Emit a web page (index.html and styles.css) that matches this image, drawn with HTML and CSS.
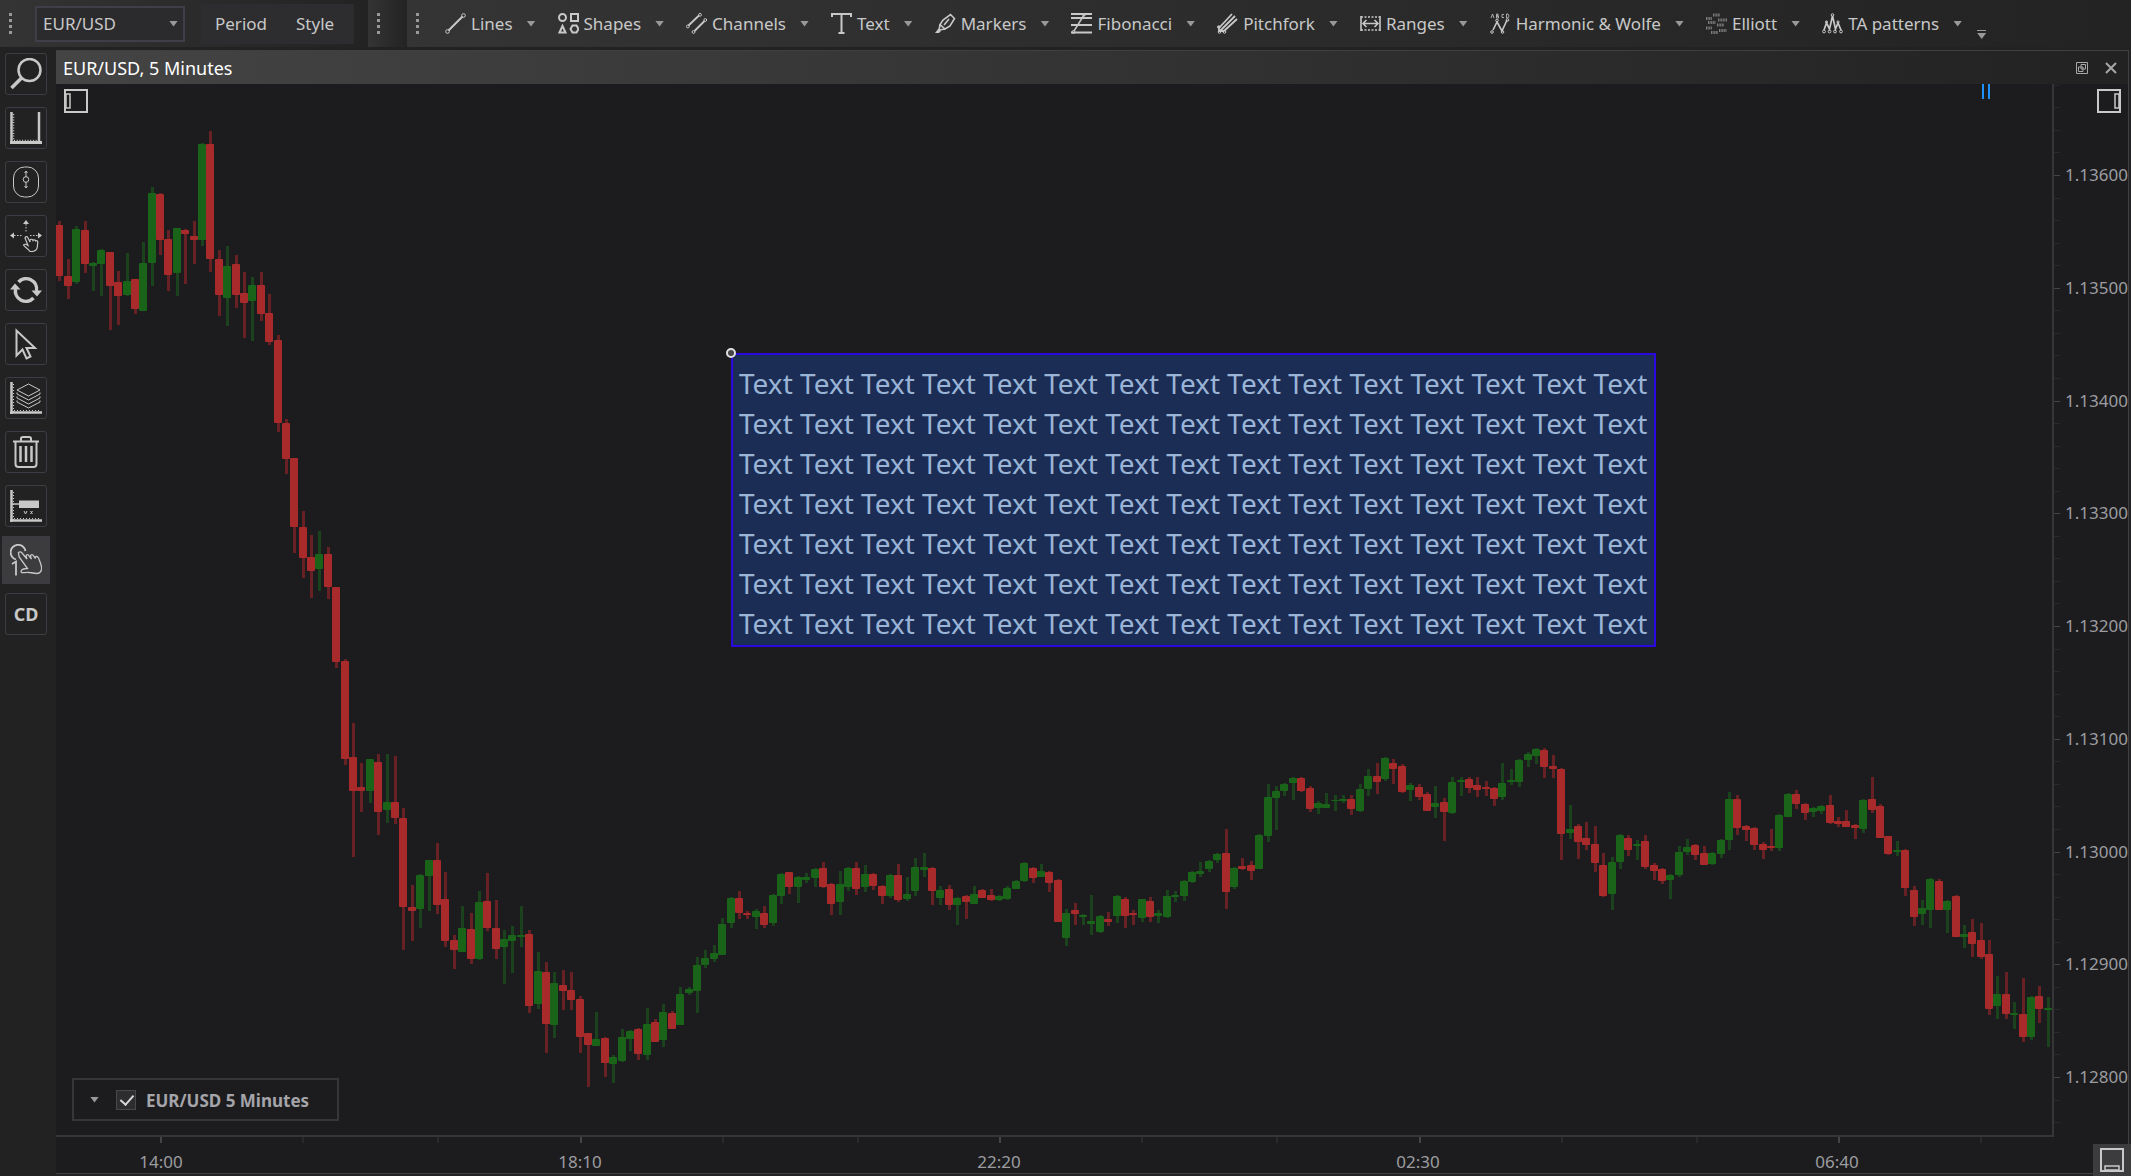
FILE: index.html
```html
<!DOCTYPE html>
<html lang="en">
<head>
  <meta charset="UTF-8" />
  <title>EUR/USD, 5 Minutes</title>
  <link rel="stylesheet" href="styles.css">
</head>
<body>

  <!-- Top toolbars -->
  <header class="toolbars">
    <div class="toolbar toolbar-symbol">
      <span class="grip"></span>
      <div class="combo">
        <select class="combo-select" aria-label="Symbol">
          <option>EUR/USD</option>
        </select>
        <span class="arrow"></span>
      </div>
      <div class="menu">
        <button class="menu-button">Period</button>
        <button class="menu-button">Style</button>
      </div>
    </div>
    <div class="toolbar toolbar-empty">
      <span class="grip"></span>
    </div>
    <div class="toolbar toolbar-drawing">
      <span class="grip"></span>
      <button class="tool">
        <svg class="tool-icon" viewBox="0 0 21 21"><path d="M3.5 17.5 17.5 3.5" stroke-width="2"/><circle cx="2.5" cy="18.5" r="1.8"/><circle cx="18.5" cy="2.5" r="1.8"/></svg>
        Lines <span class="arrow"></span>
      </button>
      <button class="tool">
        <svg class="tool-icon" viewBox="0 0 21 21"><g stroke-width="2"><circle cx="4.5" cy="4.5" r="3.5"/><path d="M13 1h7v7h-7zM4.5 13 1.5 19.5h6z"/><path d="M14.5 12.5h4l2 3.5-2 3.5h-4l-2-3.5z"/></g></svg>
        Shapes <span class="arrow"></span>
      </button>
      <button class="tool">
        <svg class="tool-icon" viewBox="0 0 21 21"><path d="M2.5 12.5 13 2.5M8.5 18 18.5 8" stroke-width="1.8"/><circle cx="1.8" cy="13.5" r="1.4"/><circle cx="14" cy="1.8" r="1.4"/><circle cx="7.5" cy="19" r="1.4"/><circle cx="19.3" cy="7" r="1.4"/></svg>
        Channels <span class="arrow"></span>
      </button>
      <button class="tool">
        <svg class="tool-icon" viewBox="0 0 21 21"><path d="M1 4V1h19v3M10.5 1v19M7.5 20h6" stroke-width="2"/></svg>
        Text <span class="arrow"></span>
      </button>
      <button class="tool">
        <svg class="tool-icon" viewBox="0 0 21 21"><path d="M15.5 1.5 19.5 5.5 15 13 10 16 5 11.5 8 7zM5 11.5 4 17l6-1M9 12l5-6" stroke-width="1.6"/><path class="solid" d="M3.5 15.5 6 18l-2 2H0z"/></svg>
        Markers <span class="arrow"></span>
      </button>
      <button class="tool">
        <svg class="tool-icon" viewBox="0 0 21 21"><path d="M0 1h21M0 5h21M0 12h21M0 19.5h21" stroke-width="2"/><path d="M3 18 13 2" stroke-width="1.5"/><circle cx="2.5" cy="19" r="1.5"/><circle cx="13" cy="1.5" r="1.5"/></svg>
        Fibonacci <span class="arrow"></span>
      </button>
      <button class="tool">
        <svg class="tool-icon" viewBox="0 0 21 21"><path d="M2 15 15 1M3 18 18 3M7 18 20 6M2 13v5h5" stroke-width="1.8"/><circle cx="1.8" cy="14" r="1.3"/><circle cx="2.5" cy="19" r="1.3"/><circle cx="7.5" cy="19" r="1.3"/></svg>
        Pitchfork <span class="arrow"></span>
      </button>
      <button class="tool">
        <svg class="tool-icon" viewBox="0 0 21 21"><path d="M1 3v15M20 3v15M3 10.5h15M6.5 7 3 10.5 6.5 14M14.5 7 18 10.5 14.5 14" stroke-width="1.6"/><path d="M1 4h19M1 17h19" stroke-width="1.5" stroke-dasharray="2 1.5"/></svg>
        Ranges <span class="arrow"></span>
      </button>
      <button class="tool">
        <svg class="tool-icon" viewBox="0 0 21 21"><path d="M3 17 7 9l5 9 5-11" stroke-width="1.6"/><path d="M1 5 2.5 1 4 5M6.5 1v4h2V3h-2 1.5V1zM14 1.5h-2v3h2M16.5 1v4h1.5l1-2-1-2z" stroke-width=".8"/><circle cx="2" cy="19" r="1.3"/><circle cx="7" cy="7.5" r="1.3"/><circle cx="12.5" cy="19" r="1.3"/><circle cx="17.5" cy="7" r="1.3"/></svg>
        Harmonic &amp; Wolfe <span class="arrow"></span>
      </button>
      <button class="tool">
        <svg class="tool-icon dim" viewBox="0 0 21 21"><path d="M7 2h7M0 5.5h6M12 7h9M2 9.5h8M11 12h7M0 15h6M13 17.5h8M5 19.5h7" stroke-width="3" stroke-dasharray="1 .6"/></svg>
        Elliott <span class="arrow"></span>
      </button>
      <button class="tool">
        <svg class="tool-icon" viewBox="0 0 21 21"><path d="M2 17 4.5 10 7.5 16 10.5 3l3 13 2.5-6 3 7" stroke-width="1.7"/><circle cx="2" cy="18.5" r="1.4"/><circle cx="7.5" cy="18.5" r="1.4"/><circle cx="13" cy="18.5" r="1.4"/><circle cx="19" cy="18.5" r="1.4"/><circle cx="4.5" cy="9" r="1.1"/><circle cx="10.5" cy="2" r="1.3"/><circle cx="16" cy="9" r="1.1"/></svg>
        TA patterns <span class="arrow"></span>
      </button>
      <button class="overflow" aria-label="More tools"><span class="arrow"></span></button>
    </div>
  </header>

  <div class="workspace">

    <!-- Side tools -->
    <nav class="sidebar">
      <button class="side-button" aria-label="Zoom">
        <svg class="side-icon" viewBox="0 0 32 32"><circle cx="19.5" cy="12" r="11" stroke-width="2.5"/><path d="M11.5 20 1.5 30" stroke-width="3.5"/></svg>
      </button>
      <button class="side-button" aria-label="Scales">
        <svg class="side-icon" viewBox="0 0 32 32"><path d="M1.5 0v32M29 0v30" stroke-width="2.5"/><path d="M0 30.5h32" stroke-width="3"/><path d="M3.5 2v28M4 28.5h25" stroke-width="1.5" stroke-dasharray="1 1.7"/></svg>
      </button>
      <button class="side-button" aria-label="Mouse wheel">
        <svg class="side-icon" viewBox="0 0 32 32"><rect x="3.5" y="1" width="25" height="30" rx="11"/><circle cx="16" cy="13.5" r="2.8"/><path d="M16 6v5M16 16v5M14.5 7 16 5l1.5 2M14.5 20l1.5 2 1.5-2"/></svg>
      </button>
      <button class="side-button" aria-label="Drag chart">
        <svg class="side-icon" viewBox="0 0 32 32"><path d="M16 4v9M4 15.5h9M20 15.5h9" stroke-dasharray="1.5 1.5"/><path class="solid" d="M16 0l3 4h-6zM0 15.5l4-3v6zM32 15.5l-4-3v6z"/><path d="M20 31.5c-2-3-5-4-6.5-6.5 1-1.5 3-.5 4.5.5L15 18c0-1.5 2-2 2.8-.5L20 22v-2c1-1.3 2.5-.8 3 .5.5-1 2.3-1 2.8.5.8-.8 2-.2 2 1l-.5 5c0 2-2 5-7.3 4.500z" stroke-width="1.2"/></svg>
      </button>
      <button class="side-button" aria-label="Refresh">
        <svg class="side-icon" viewBox="0 0 32 32"><path d="M8.5 8A10.5 10.5 0 0 1 26.5 17M23.5 24A10.5 10.5 0 0 1 5.5 15" stroke-width="3.5"/><path class="solid" d="M0 15.5h10.5L5 9.5zM21.5 16.5H32L27 22.5z"/></svg>
      </button>
      <button class="side-button" aria-label="Pointer">
        <svg class="side-icon" viewBox="0 0 32 32"><path d="M6.5 2.5v25l6-6 4 9 4-2-4-8.5h8.5z" stroke-width="2"/></svg>
      </button>
      <button class="side-button" aria-label="Layers">
        <svg class="side-icon" viewBox="0 0 32 32"><path d="M1.5 0v32" stroke-width="2.5"/><path d="M0 30.5h32" stroke-width="2.5"/><path d="M3.5 2v28M4 28.5h25" stroke-dasharray="1 2"/><path d="M18.5 2 30 8l-11.5 6L7 8zM7 10.5 7 12l11.5 6L30 12v-1.5M7 14.5V16l11.5 6L30 16v-1.5M7 18.5V20l11.5 6L30 20v-1.5"/></svg>
      </button>
      <button class="side-button" aria-label="Delete">
        <svg class="side-icon" viewBox="0 0 32 32"><path d="M3 5.5h26M11 5V2.5C11 1.5 12 1 13 1h6c1 0 2 .5 2 1.5V5M5.500 6v22c0 2 1 3 3 3h15c2 0 3-1 3-3V6" stroke-width="2"/><path d="M10.5 10v16M16 10v16M21.5 10v16" stroke-width="2.5"/></svg>
      </button>
      <button class="side-button" aria-label="Price marker">
        <svg class="side-icon" viewBox="0 0 32 32"><path d="M1.5 0v32M0 30.5h32" stroke-width="2.5"/><path d="M3.5 2v28M4 28.5h25" stroke-dasharray="1 2"/><path d="M2 14h8" stroke-width="1.5"/><path class="solid" d="M9 10.5h20v7.5H9z"/><path d="M14 21l1.5 3 1.5-3M20.5 21l2 3M22.5 21l-2 3"/></svg>
      </button>
      <button class="side-button active" aria-label="One click trading">
        <svg class="side-icon" viewBox="0 0 32 32"><path d="M6 15.5A7.5 7.5 0 1 1 15.5 7M2 20l4-2.500V31.5" stroke-width="1.8"/><path d="M8.5 8.5c1.5-1.3 2.7-.5 3.5.5l5 6c-.5-1.5-1.5-3-.5-4s2 0 2.5 1l2.5 3c-1-2-1.5-3-.5-4s2 0 2.5 1l2 2.5c-.5-1.5 0-2 1-2s1.5.5 2 1.5c1.5 3.5 3.5 9 3 11.5-.5 2-2.500 4-5 4l-7-1c-3-.5-7 .5-8 0-1-1 0-3 2-3.5l4-.5-8-11c-.8-1.5-.8-3.5-1-4z" stroke-width="1.3"/></svg>
      </button>
      <button class="side-button">CD</button>
    </nav>

    <main class="chart-window">
      <div class="titlebar">
        <h1 class="title">EUR/USD, 5 Minutes</h1>
        <button class="window-button" aria-label="Restore">
          <svg class="window-icon" viewBox="0 0 12 12"><path d="M.5.5h11v11H.5z"/><path d="M5 2.500h4.500V7H5zM2.500 5H7v4.500H2.500z"/></svg>
        </button>
        <button class="window-button" aria-label="Close">
          <svg class="window-icon" viewBox="0 0 12 12"><path d="M1 1l10 10M11 1 1 11" stroke-width="2"/></svg>
        </button>
      </div>

      <div class="chart">
        <section class="plot">
          <svg class="candles" id="candles" viewBox="0 0 1996 1051" preserveAspectRatio="none"></svg>

          <button class="panel-toggle toggle-left" aria-label="Left panel">
            <svg class="toggle-icon" viewBox="0 0 24 24"><path d="M1 1h22v22H1z" stroke-width="2"/><path d="M2 5h4v14H2z" stroke-width="1.5"/></svg>
          </button>
          <div class="pause"></div>

          <div class="note">
            <span class="note-handle"></span>
            <p class="note-text">
              Text Text Text Text Text Text Text Text Text Text Text Text Text Text Text<br>
              Text Text Text Text Text Text Text Text Text Text Text Text Text Text Text<br>
              Text Text Text Text Text Text Text Text Text Text Text Text Text Text Text<br>
              Text Text Text Text Text Text Text Text Text Text Text Text Text Text Text<br>
              Text Text Text Text Text Text Text Text Text Text Text Text Text Text Text<br>
              Text Text Text Text Text Text Text Text Text Text Text Text Text Text Text<br>
              Text Text Text Text Text Text Text Text Text Text Text Text Text Text Text
            </p>
          </div>

          <div class="legend">
            <span class="arrow"></span>
            <input class="legend-check" type="checkbox" id="series" checked>
            <label class="legend-label" for="series">EUR/USD 5 Minutes</label>
          </div>
        </section>

        <aside class="price-axis">
          <svg class="price-ticks" id="priceTicks" viewBox="0 0 6 1051" preserveAspectRatio="none"></svg>
          <span>1.13600</span>
          <span>1.13500</span>
          <span>1.13400</span>
          <span>1.13300</span>
          <span>1.13200</span>
          <span>1.13100</span>
          <span>1.13000</span>
          <span>1.12900</span>
          <span>1.12800</span>
          <button class="panel-toggle toggle-right" aria-label="Right panel">
            <svg class="toggle-icon" viewBox="0 0 24 24"><path d="M1 1h22v22H1z" stroke-width="2"/><path d="M18 5h4v14h-4z" stroke-width="1.5"/></svg>
          </button>
        </aside>

        <footer class="time-axis">
          <svg class="time-ticks" id="timeTicks" viewBox="0 0 1998 6" preserveAspectRatio="none"></svg>
          <span>14:00</span>
          <span>18:10</span>
          <span>22:20</span>
          <span>02:30</span>
          <span>06:40</span>
        </footer>
      </div>
    </main>
  </div>

  <button class="bottom-toggle" aria-label="Bottom panel">
    <svg class="toggle-icon" viewBox="0 0 24 24"><path d="M1 1h22v22H1z" stroke-width="2"/><path d="M5 22v-4h14v4z" stroke-width="1.5"/></svg>
  </button>

  <script>
    // direction, then high, body top, body bottom, low
    const series = `
      r,137,141,192,197 r,175,192,202,215 g,142,145,198,200 r,137,146,180,189 g,178,179,182,207 g,165,166,180,212
      r,168,168,202,246 r,187,198,212,241 g,169,197,211,212 r,195,195,225,230 g,158,179,227,227 g,103,109,179,202
      r,109,110,156,171 r,146,155,191,207 g,144,144,189,212 r,145,146,150,200 r,137,152,156,180 g,59,60,156,162
      r,47,60,175,188 r,166,175,211,232 g,162,182,214,242 r,171,180,211,224 r,188,209,219,254 g,193,201,217,257
      r,188,201,230,237 r,210,229,258,261 r,251,256,339,348 r,335,339,375,390 r,374,374,443,469 r,427,443,474,494
      r,451,473,487,514 g,447,470,485,507 r,463,470,503,515 r,503,503,578,584 r,575,577,675,681 r,639,673,707,773
      r,679,703,707,728 g,675,675,707,719 r,670,678,728,751 g,670,718,726,739 r,672,718,734,740 r,724,734,823,866
      r,801,823,827,857 g,790,791,825,844 g,776,776,792,827 r,759,776,821,830 r,788,815,857,863 r,851,856,866,885
      g,822,844,868,868 r,829,845,875,880 g,807,818,875,876 r,789,817,844,847 r,816,844,865,875 g,846,855,863,900
      g,842,851,857,889 g,822,851,853,863 r,846,850,922,929 g,868,887,920,925 r,878,888,940,969 g,888,899,941,954
      r,886,901,907,926 r,888,906,916,926 r,912,915,953,969 r,949,949,961,1003 g,928,955,962,962 r,953,954,979,993
      g,971,973,980,999 g,945,953,977,978 g,946,947,955,967 r,944,945,970,976 g,924,940,971,976 r,935,938,958,958
      g,920,928,956,963 r,927,929,945,945 g,903,910,941,941 g,903,905,909,911 g,873,881,907,929 g,866,874,881,884
      g,861,869,875,878 g,834,840,871,871 g,813,814,839,844 r,807,814,829,835 r,827,829,831,835 g,825,827,833,845
      r,822,829,841,844 g,810,811,839,842 g,789,790,812,820 r,788,788,803,810 g,792,793,803,819 g,789,793,796,799
      g,784,785,794,803 r,778,784,803,804 r,799,800,820,831 g,787,800,818,831 g,783,784,803,807 r,778,784,805,811
      g,781,790,803,808 r,789,790,802,806 r,801,802,812,820 g,790,791,812,814 r,780,791,816,818 g,793,810,815,817
      g,774,783,807,812 g,769,783,786,793 r,783,784,807,821 g,802,806,814,821 r,801,805,821,826 g,813,814,821,841
      r,811,812,818,835 g,802,810,820,820 r,805,806,814,814 r,805,811,816,817 g,811,812,816,817 g,802,804,815,816
      g,796,797,805,805 g,778,779,797,798 r,783,784,794,799 g,780,787,793,793 r,787,788,799,808 r,795,796,838,838
      g,825,829,854,862 r,819,826,830,841 g,830,831,833,841 g,811,837,840,851 g,831,832,848,849 r,828,835,838,842
      g,811,812,832,839 r,813,815,832,844 r,826,829,831,841 g,815,815,834,838 r,813,817,833,838 g,826,829,832,839
      g,806,812,833,834 g,807,811,813,818 g,796,797,812,817 g,787,788,798,799 g,778,787,790,793 g,776,777,785,788
      g,769,770,776,779 r,745,769,808,825 g,783,784,803,805 r,774,782,785,786 r,777,781,787,796 g,750,751,785,785
      g,700,713,752,758 g,702,707,714,746 g,699,700,707,712 g,693,694,699,716 r,693,694,707,708 r,702,704,725,728
      g,717,719,724,730 g,709,720,724,724 g,711,716,717,727 g,711,715,717,719 r,711,715,725,731 g,700,705,727,728
      g,685,692,705,712 r,679,692,698,710 g,673,674,695,697 r,675,679,685,700 r,680,682,708,709 g,699,701,706,717
      r,700,703,713,716 r,708,710,727,727 g,702,719,723,734 r,714,718,728,757 g,693,698,729,730 g,693,696,698,712
      r,693,695,704,709 r,693,701,706,713 r,697,703,705,712 r,703,704,715,722 g,679,699,713,716 g,685,696,698,701
      g,675,676,698,703 g,668,670,676,683 g,664,665,672,680 r,664,666,683,694 r,671,682,685,694 r,684,685,750,776
      g,721,745,749,755 r,740,742,758,775 r,738,754,761,766 r,742,760,779,788 r,769,781,812,813 g,773,778,810,826
      g,750,751,778,785 r,751,754,766,772 g,756,760,762,776 r,751,757,783,785 r,779,781,787,796 r,784,785,797,800
      g,790,791,796,815 g,762,768,791,793 g,755,763,768,771 r,760,761,771,776 r,762,769,781,781 g,768,769,780,781
      g,755,756,770,774 g,708,715,756,766 r,711,715,744,751 r,741,742,746,757 r,743,744,761,766 r,758,760,766,775
      r,745,762,764,767 g,730,731,764,767 g,709,710,733,733 r,706,710,720,725 r,719,720,729,736 g,723,724,728,733
      g,721,722,727,730 r,711,721,739,740 r,733,737,740,743 r,726,737,743,743 r,740,741,744,755 g,715,716,745,749
      r,693,715,726,729 r,720,722,754,754 r,752,752,770,771 g,757,766,768,772 r,765,766,804,812 r,802,806,833,842
      g,816,824,830,841 g,794,795,826,844 r,795,797,826,826 g,816,817,826,849 r,811,812,853,853 g,841,850,853,864
      r,835,848,860,873 r,839,856,873,875 r,856,870,925,931 g,892,910,922,935 r,888,910,930,935 g,918,929,931,945
      r,894,930,953,958 g,912,913,953,956 r,902,912,925,939 g,913,924,926,963`;

    const step = 8.39;
    let candles = "";
    series.trim().split(/\s+/).forEach((item, i) => {
      const [dir, high, top, bottom, low] = item.split(",");
      const x = Math.round(3.4 + i * step);
      candles += `<rect class="wick-${dir}" x="${x - 1}" y="${high}" width="3" height="${low - high}"/>`;
      candles += `<rect class="body-${dir}" x="${x - 4}" y="${top}" width="8" height="${bottom - top}" rx="1"/>`;
    });
    document.getElementById("candles").innerHTML = candles;

    // price ticks: one major and four minor per 100 points
    let priceTicks = "";
    for (let i = -4; i < 43; i++) {
      const y = Math.round(91 + i * 22.55);
      priceTicks += `<rect class="${i % 5 === 0 ? "tick-major" : "tick-minor"}" x="0" y="${y}" width="6" height="1"/>`;
    }
    document.getElementById("priceTicks").innerHTML = priceTicks;

    // 50 candles between time labels
    let timeTicks = "";
    for (let i = 0; i < 5; i++) {
      const x = Math.round(104 + i * 50 * step);
      timeTicks += `<rect class="tick-major" x="${x}" y="0" width="2" height="6"/>`;
      timeTicks += `<rect class="tick-minor" x="${x + 142}" y="0" width="2" height="6"/>`;
      timeTicks += `<rect class="tick-minor" x="${x + 277}" y="0" width="2" height="6"/>`;
    }
    document.getElementById("timeTicks").innerHTML = timeTicks;
  </script>

</body>
</html>
```
FILE: styles.css
```css
* {
  box-sizing: border-box;
}
body {
  margin: 0;
  height: 100vh;
  display: flex;
  flex-direction: column;
  overflow: hidden;
  background: #222222;
  color: #c8c8c8;
  font-family: "Noto Sans", "Open Sans", sans-serif;
  font-size: 17px;
  line-height: 24px;
}
button, select {
  margin: 0;
  padding: 0;
  border: 0;
  background: none;
  color: inherit;
  font: inherit;
}
svg {
  display: block;
  fill: none;
  stroke: #c8c8c8;
}
.solid {
  fill: #c8c8c8;
  stroke: none;
}
.arrow {
  flex: none;
  width: 9px;
  height: 6px;
  background: #999999;
  clip-path: polygon(0 0, 100% 0, 50% 100%);
}

/* toolbars */
.toolbars {
  flex: none;
  display: flex;
  height: 47px;
  margin-bottom: 3px;
}
.toolbar {
  display: flex;
  align-items: center;
  padding-left: 9px;
  background: linear-gradient(to right, #343434, #232323);
}
.toolbar-symbol {
  width: 368px;
}
.toolbar-empty {
  width: 39px;
}
.toolbar-drawing {
  flex: 1;
}
.grip {
  flex: none;
  width: 3px;
  height: 21px;
  background: repeating-linear-gradient(#999999 0 3px, transparent 3px 6px);
}
.combo {
  position: relative;
  width: 150px;
  height: 36px;
  margin-left: 23px;
}
.combo-select {
  appearance: none;
  width: 100%;
  height: 100%;
  padding: 0 6px;
  border: 2px solid #3f3f4a;
  background: #2b2b2d;
}
.combo .arrow {
  position: absolute;
  right: 7px;
  top: 15px;
}
.menu {
  display: flex;
  gap: 29px;
  height: 40px;
  margin-left: 16px;
  padding: 0 20px 0 14px;
  background: #2d2d2f;
}
.toolbar-drawing .grip {
  margin-right: 15px;
}
.tool {
  display: flex;
  align-items: center;
  gap: 5px;
  height: 40px;
  padding: 0 11px;
  white-space: nowrap;
}
.tool .arrow {
  margin-left: 9px;
}
.tool-icon {
  width: 21px;
  height: 21px;
}
.dim {
  stroke: #808080;
}
.overflow {
  align-self: flex-end;
  margin: 0 0 8px 4px;
  padding-top: 2px;
  border-top: 1px solid #999999;
}
.overflow .arrow {
  display: block;
}

.workspace {
  flex: 1;
  min-height: 0;
  display: flex;
}

/* side tools */
.sidebar {
  flex: none;
  width: 56px;
  display: flex;
  flex-direction: column;
  gap: 12px;
  padding: 3px 0 0 5px;
}
.side-button {
  flex: none;
  display: flex;
  align-items: center;
  justify-content: center;
  width: 42px;
  height: 42px;
  border: 1px solid #3c3c44;
  border-radius: 3px;
  font-size: 18px;
  font-weight: bold;
}
.side-button.active {
  width: 48px;
  height: 48px;
  margin: -3px;
  border-radius: 0;
  background: #3c3c3e;
}
.side-icon {
  width: 32px;
  height: 32px;
}

/* chart window */
.chart-window {
  flex: 1;
  display: flex;
  flex-direction: column;
  margin: 0 2px 2px 0;
  border-top: 1px solid #3f3f46;
  border-right: 1px solid #3f3f46;
  border-bottom: 1px solid #3f3f46;
}
.titlebar {
  flex: none;
  display: flex;
  align-items: center;
  gap: 17px;
  height: 33px;
  padding: 0 11px 0 7px;
  background: linear-gradient(to right, #444444, #222222);
}
.title {
  flex: 1;
  margin: 0;
  color: #ffffff;
  font-size: 18px;
  font-weight: normal;
}
.window-icon {
  width: 12px;
  height: 12px;
  stroke: #a8a8a8;
}
.chart {
  flex: 1;
  display: grid;
  grid-template-columns: 1fr 74px;
  grid-template-rows: 1fr 36px;
  background: #1c1c1e;
  color: #9c9ca0;
}
.plot {
  position: relative;
  border-right: 2px solid #363638;
  border-bottom: 2px solid #363638;
}
.candles {
  width: 100%;
  height: 100%;
  stroke: none;
}
.body-r { fill: #a82a2b; }
.wick-r { fill: #672124; }
.body-g { fill: #196419; }
.wick-g { fill: #1a421c; }
.tick-major { fill: #444446; }
.tick-minor { fill: #29292b; }

.panel-toggle {
  position: absolute;
  top: 5px;
}
.toggle-icon {
  width: 24px;
  height: 24px;
}
.toggle-left {
  left: 8px;
}
.toggle-right {
  right: 7px;
}
.pause {
  position: absolute;
  top: 0;
  right: 62px;
  width: 8px;
  height: 15px;
  border: solid #1e90ff;
  border-width: 0 2px;
}

/* text drawn on the chart */
.note {
  position: absolute;
  left: 675px;
  top: 269px;
  width: 925px;
  padding: 8px 6px 2px;
  border: 2px solid #2c08e0;
  background: #1b2d55;
}
.note-text {
  margin: 0;
  color: #9ab4d6;
  font-size: 28px;
  line-height: 40px;
  white-space: nowrap;
}
.note-handle {
  position: absolute;
  left: -7px;
  top: -7px;
  width: 10px;
  height: 10px;
  border: 2px solid #e0e0e0;
  border-radius: 50%;
  background: #444444;
}

.legend {
  position: absolute;
  left: 16px;
  bottom: 14px;
  display: flex;
  align-items: center;
  height: 43px;
  padding: 0 28px 0 16px;
  border: 2px solid #363638;
}
.legend-check {
  appearance: none;
  width: 20px;
  height: 20px;
  margin: 0 10px 0 17px;
  border: 1px solid #48484c;
  background: #2d2d30;
}
.legend-check:checked::before {
  content: "";
  display: block;
  width: 6px;
  height: 11px;
  margin: 1px 0 0 6px;
  border: solid #d8d8d8;
  border-width: 0 2px 2px 0;
  transform: rotate(42deg);
}
.legend-label {
  padding-top: 3px;
  color: #a4a4a9;
  font-weight: bold;
}

/* axes */
.price-axis {
  position: relative;
  display: flex;
  flex-direction: column;
  justify-content: space-between;
  padding: 79px 0 48px 11px;
}
.price-ticks {
  position: absolute;
  left: 0;
  top: 0;
  width: 6px;
  height: calc(100% - 2px);
  stroke: none;
}
.time-axis {
  position: relative;
  display: flex;
  justify-content: space-between;
  padding: 13px 187px 0 75px;
}
.time-axis span {
  width: 60px;
  text-align: center;
}
.time-ticks {
  position: absolute;
  left: 0;
  top: 0;
  width: 100%;
  height: 6px;
  stroke: none;
}
.bottom-toggle {
  position: absolute;
  right: 0;
  bottom: 0;
  padding: 4px 7px;
  background: #3c3c3e;
}
```
